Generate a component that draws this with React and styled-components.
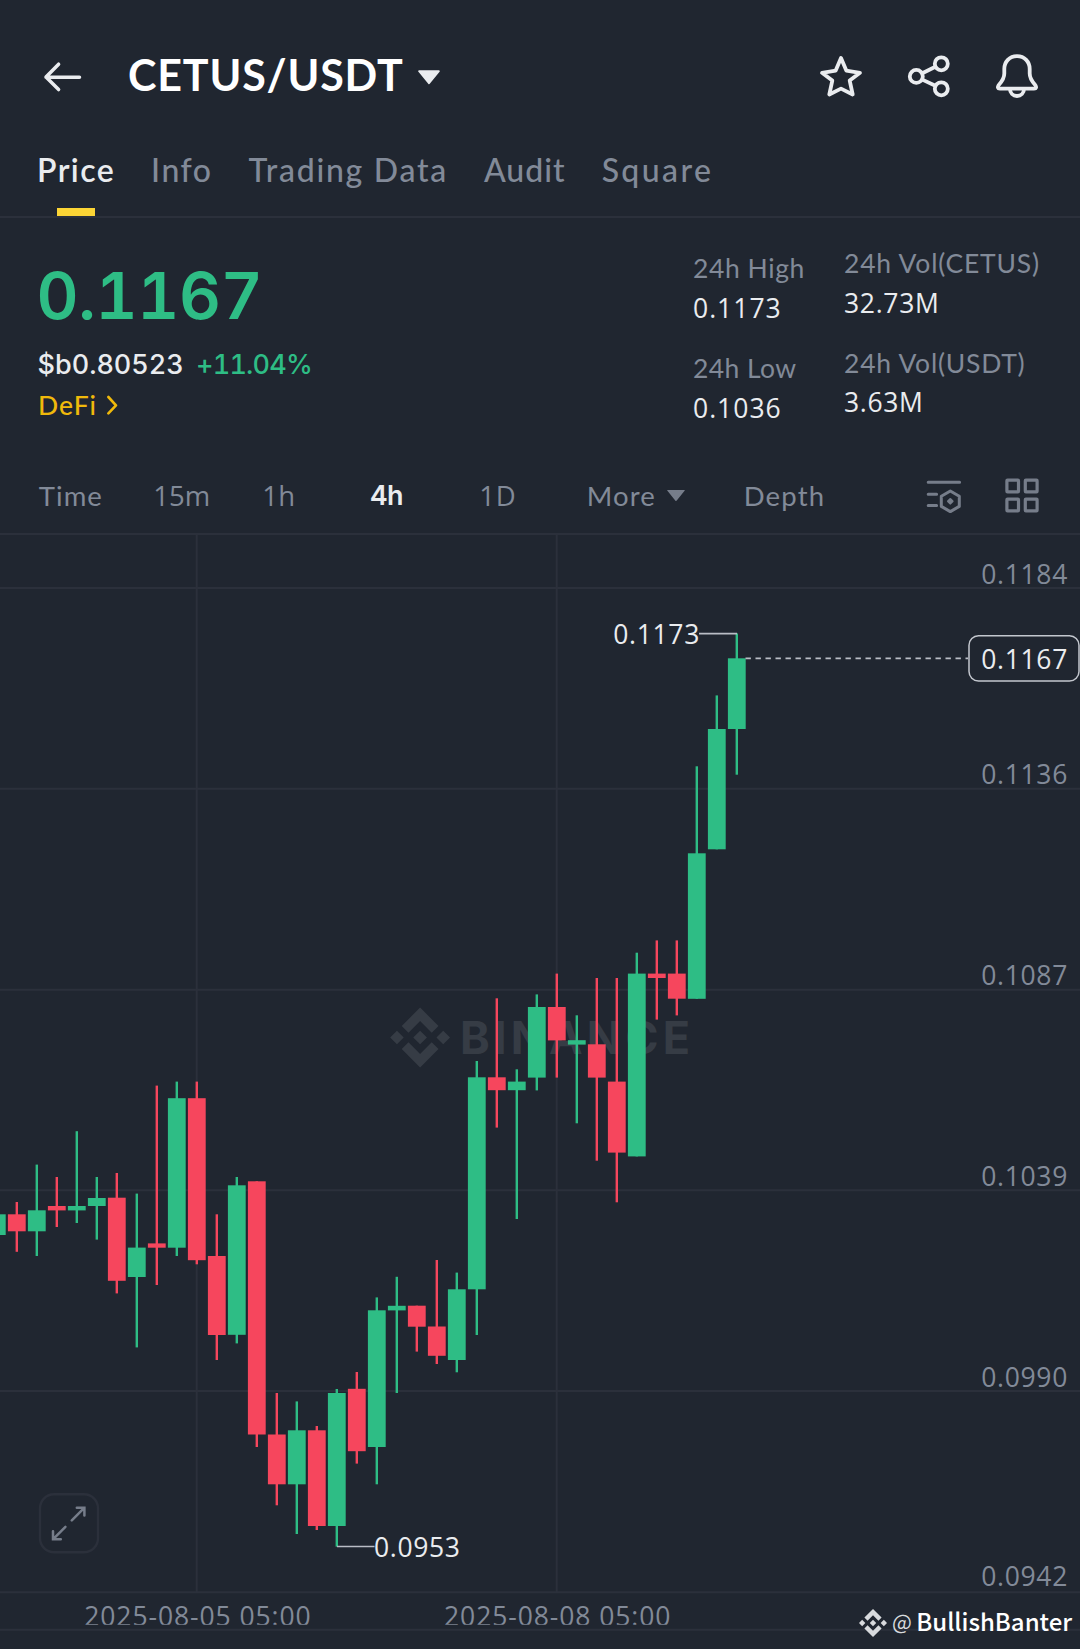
import React from "react";
import styled, { createGlobalStyle } from "styled-components";

const LETTERS = 'Lato, "Open Sans", sans-serif';
const DIGITS = '"Open Sans", "Noto Sans", sans-serif';
const DIGITS_MEDIUM = 'Inter, "Open Sans", sans-serif';

const color = {
  bg: "#202630",
  line: "#2b303b",
  text: "#eaecef",
  muted: "#828a98",
  icon: "#767d8a",
  up: "#2ebd85",
  down: "#f6465d",
  accent: "#fcd535",
  link: "#f0b90b",
  mark: "#363c45",
};

const GlobalStyle = createGlobalStyle`
  *, *::before, *::after { box-sizing: border-box; }
  html, body { margin: 0; background: ${color.bg}; }
`;

const Screen = styled.main`
  display: flex;
  flex-direction: column;
  width: 1080px;
  height: 1649px;
  overflow: hidden;
  background: ${color.bg};
  color: ${color.text};
  font-family: ${LETTERS};
  white-space: nowrap;
`;

/* ---------- header ---------- */

const Header = styled.header`
  display: flex;
  align-items: center;
  height: 138px;
  padding: 16px 39px 0 40px;
`;

const Icon = styled.svg`
  display: block;
  flex: none;
  width: ${(p) => p.$size}px;
  height: ${(p) => p.$size}px;
  fill: none;
  stroke: ${(p) => p.$color || color.text};
  stroke-width: ${(p) => p.$stroke || 3.8};
  stroke-linecap: round;
  stroke-linejoin: round;
`;

const Pair = styled.h1`
  margin: 0 0 0 40px;
  padding-bottom: 4px;
  font-size: 43px;
  line-height: 52px;
  font-weight: 700;
  letter-spacing: 0.82px;
  color: #fff;
`;

const Caret = styled.svg`
  display: block;
  flex: none;
  width: ${(p) => p.$w}px;
  height: ${(p) => p.$h}px;
  margin-left: ${(p) => p.$gap}px;
  fill: ${(p) => p.$color};
  stroke: ${(p) => p.$color};
  stroke-width: 2;
  stroke-linejoin: round;
`;

const Actions = styled.div`
  display: flex;
  gap: 40px;
  margin-left: auto;
`;

/* ---------- tabs ---------- */

const Tabs = styled.nav`
  display: flex;
  gap: 36px;
  height: 80px;
  padding-left: 37px;
  border-bottom: 2px solid ${color.line};
`;

const Tab = styled.div`
  display: flex;
  flex-direction: column;
  align-items: center;
  padding-top: 12px;
  font-size: 32px;
  line-height: 40px;
  font-weight: ${(p) => (p.$active ? 600 : 500)};
  letter-spacing: ${(p) => p.$track}px;
  color: ${(p) => (p.$active ? color.text : color.muted)};
`;

const TabBar = styled.span`
  width: 38px;
  height: 8px;
  margin-top: auto;
  background: ${color.accent};
`;

/* ---------- summary ---------- */

const Summary = styled.section`
  display: flex;
  height: 240px;
  padding-left: 37.5px;
`;

const Quote = styled.div`
  flex: 1;
  padding-top: 43px;
`;

const LastPrice = styled.div`
  margin-left: -1px;
  font: 600 65px/70px ${DIGITS_MEDIUM};
  font-variant-numeric: tabular-nums;
  letter-spacing: -0.3px;
  color: ${color.up};
`;

const QuoteRow = styled.div`
  display: flex;
  align-items: center;
  height: 40px;
  margin-top: ${(p) => p.$top}px;
`;

const Fiat = styled.span`
  width: 158.5px;
  font: 500 27px/40px ${DIGITS_MEDIUM};
  font-variant-numeric: tabular-nums;
  letter-spacing: 0;
`;

const Change = styled.span`
  font: 500 27px/40px ${DIGITS_MEDIUM};
  font-variant-numeric: tabular-nums;
  letter-spacing: -0.8px;
  color: ${color.up};
`;

const Sector = styled.span`
  margin-right: 8px;
  padding-left: 0.5px;
  font-size: 26.5px;
  line-height: 40px;
  font-weight: 500;
  letter-spacing: 1px;
  color: ${color.link};
`;

const Stats = styled.div`
  display: flex;
  flex-direction: column;
  gap: ${(p) => p.$gap}px;
  width: ${(p) => p.$w}px;
  padding-top: ${(p) => p.$top}px;
  line-height: ${(p) => p.$line}px;
`;

const StatLabel = styled.div`
  font-size: 26.5px;
  letter-spacing: ${(p) => p.$track}px;
  color: ${color.muted};
`;

const StatValue = styled.div`
  font-family: ${DIGITS};
  font-size: 26.5px;
  letter-spacing: ${(p) => p.$track}px;
`;

/* ---------- interval bar ---------- */

const Intervals = styled.nav`
  display: grid;
  grid-template-columns: 114.5px 109px 107.5px 109.5px 107.5px 157px 1fr auto;
  align-items: center;
  height: 77px;
  padding: 0 40px 0 38.7px;
  border-bottom: 2px solid ${color.line};
`;

const Interval = styled.div`
  display: flex;
  align-items: center;
  padding-top: 1px;
  font-family: ${(p) => (p.$digits ? DIGITS : LETTERS)};
  font-size: 27.5px;
  line-height: 40px;
  font-weight: 400;
  letter-spacing: ${(p) => p.$track}px;
  color: ${color.muted};
`;

const ActiveInterval = styled(Interval)`
  font-family: ${DIGITS_MEDIUM};
  font-size: 27px;
  font-weight: 600;
  padding-top: 0;
  color: ${color.text};
`;

const Tools = styled.div`
  display: flex;
  gap: 42px;
`;

/* ---------- chart ---------- */

const Chart = styled.svg`
  display: block;
  width: 1080px;
  height: 1114px;
`;

const GridLine = styled.line`
  stroke: ${color.line};
  stroke-width: 2;
`;

const AxisText = styled.text`
  font: 400 26.5px ${DIGITS};
  fill: ${(p) => (p.$strong ? color.text : color.muted)};
`;

const MarkText = styled.text`
  font: 700 45px Inter, "Open Sans", sans-serif;
  fill: ${color.mark};
`;

const Handle = styled.text`
  font: 500 24px "Noto Sans CJK SC", "Noto Sans", sans-serif;
  fill: #fff;
`;

const At = styled.text`
  font: 400 21px "Noto Sans CJK SC", "Noto Sans", sans-serif;
  fill: #d8dadd;
`;

const rows = [588, 788.7, 989.7, 1190.3, 1391, 1592.3, 1629.7];
const columns = [196.7, 556.7];
const priceAxis = [
  ["0.1184", 583.8],
  ["0.1136", 784],
  ["0.1087", 984.8],
  ["0.1039", 1185.8],
  ["0.0990", 1386.6],
  ["0.0942", 1586.2],
];
const dates = [
  ["2025-08-05 05:00", 84.2],
  ["2025-08-08 05:00", 444],
];

/* [rising, body top, body bottom, wick top, wick bottom] */
const candles = [
  [1, 1214.3, 1235, 1214.3, 1235],
  [0, 1214.3, 1231.3, 1202, 1251.8],
  [1, 1210.3, 1231.3, 1164.6, 1256],
  [0, 1206, 1210.4, 1177, 1227],
  [1, 1206, 1210.4, 1131.2, 1223],
  [1, 1198, 1206, 1177, 1239.6],
  [0, 1197.7, 1280.8, 1173, 1293.4],
  [1, 1247.6, 1277, 1193.6, 1347.4],
  [0, 1243.4, 1247.7, 1085.6, 1285],
  [1, 1098.2, 1247.7, 1081.6, 1256],
  [0, 1098.2, 1260.2, 1081.6, 1264.3],
  [0, 1256, 1335, 1214.3, 1360],
  [1, 1185.3, 1334.8, 1177, 1343.4],
  [0, 1181.3, 1434.5, 1181.3, 1447],
  [0, 1434.5, 1484.3, 1393, 1505.3],
  [1, 1430.3, 1484.3, 1401.4, 1534],
  [0, 1430.3, 1526, 1426, 1530],
  [1, 1393, 1526, 1389, 1546.7],
  [0, 1388.8, 1451.2, 1372, 1463.6],
  [1, 1310.3, 1447, 1297.4, 1484.3],
  [1, 1305.8, 1310.4, 1276.8, 1393],
  [0, 1305.7, 1326.7, 1305.7, 1351.6],
  [0, 1326.5, 1355.8, 1260, 1364],
  [1, 1289.3, 1360, 1272.6, 1372.3],
  [1, 1077.3, 1289.3, 1061, 1335],
  [0, 1077.3, 1090.2, 998.3, 1127.6],
  [1, 1081.6, 1090.2, 1069.3, 1219],
  [1, 1007, 1077.6, 994.4, 1090.4],
  [0, 1007, 1040.4, 973.6, 1077.6],
  [1, 1040.2, 1044.6, 1015.3, 1123.3],
  [0, 1044.3, 1077.6, 978, 1160.7],
  [0, 1081.6, 1152.6, 978, 1202.3],
  [1, 973.6, 1156.4, 952.7, 1156.4],
  [0, 973.6, 978, 940.4, 1019.6],
  [0, 973.6, 998.7, 940.4, 1015.4],
  [1, 853.3, 998.8, 766.3, 998.8],
  [1, 729, 849.3, 695.4, 849.3],
  [1, 658.3, 729, 633.4, 774.7],
];

const LOGO =
  "M38.73 53.2 63.32 28.62 87.92 53.22 102.22 38.91 63.32 0 24.43 38.9ZM0 63.31 14.3 49 28.61 63.31 14.31 77.6ZM38.73 73.41 63.32 98 87.92 73.4 102.23 87.69 63.33 126.6 24.42 87.72ZM98 63.31 112.3 49 126.61 63.3 112.3 77.62ZM77.83 63.3 63.32 48.78 48.81 63.28 63.32 77.78Z";

function Candle({ index, data }) {
  const [rising, top, bottom, high, low] = data;
  const x = (index - 1) * 20 + 16.8;
  const fill = rising ? color.up : color.down;
  return (
    <g fill={fill}>
      <rect x={x - 1.2} y={high} width={2.4} height={low - high} />
      <rect x={x - 8.9} y={top} width={17.8} height={bottom - top} />
    </g>
  );
}

function PriceChart() {
  return (
    <Chart viewBox="0 535 1080 1114">
      <defs>
        <clipPath id="dateStrip">
          <rect x="0" y="1595" width="1080" height="29.8" />
        </clipPath>
      </defs>

      {rows.map((y) => (
        <GridLine key={y} x1="0" x2="1080" y1={y} y2={y} />
      ))}
      {columns.map((x) => (
        <GridLine key={x} x1={x} x2={x} y1="535" y2="1592" />
      ))}

      <path d={LOGO} fill={color.mark} transform="translate(390.2 1007.6) scale(0.4723)" />
      <MarkText x="460" y="1054" textLength="230">BINANCE</MarkText>

      {candles.map((c, i) => (
        <Candle key={i} index={i} data={c} />
      ))}

      {priceAxis.map(([label, y]) => (
        <AxisText key={label} x="981.3" y={y} textLength="86">{label}</AxisText>
      ))}
      <g clipPath="url(#dateStrip)">
        {dates.map(([label, x]) => (
          <AxisText key={label} x={x} y="1626" textLength="226.4">{label}</AxisText>
        ))}
      </g>

      <path d="M699 633.6H737" stroke="#b9bdc5" strokeWidth="1.6" />
      <AxisText $strong x="613.3" y="643.8" textLength="86">0.1173</AxisText>
      <path d="M337 1546.5H374.5" stroke="#b9bdc5" strokeWidth="1.6" />
      <AxisText $strong x="374" y="1556.6" textLength="86">0.0953</AxisText>

      <path d="M745.5 658.4H968" stroke="#b9bdc5" strokeWidth="1.6" strokeDasharray="5.4 4.6" />
      <rect x="969" y="635.7" width="110" height="45.3" rx="9.5" fill={color.bg} stroke="#c3c7ce" strokeWidth="1.5" />
      <AxisText $strong x="981.3" y="668.8" textLength="86">0.1167</AxisText>

      <rect x="40" y="1494.3" width="58" height="58" rx="14" fill={color.bg} stroke={color.line} strokeWidth="2.4" />
      <path
        d="M71.8 1520.4 84 1508.2M76.8 1507.8H84.4V1515.6M65.4 1526.8 53.4 1538.8M53 1531.2V1539.2H60.8"
        fill="none"
        stroke={color.icon}
        strokeWidth="2.5"
        strokeLinecap="round"
        strokeLinejoin="miter"
      />

      <path d={LOGO} fill="#d8dadd" transform="translate(859 1609) scale(0.2212)" />
      <At x="892" y="1630">@</At>
      <Handle x="916.3" y="1630.8">BullishBanter</Handle>
    </Chart>
  );
}

const tabs = [
  ["Price", 1.4, true],
  ["Info", 1.5],
  ["Trading Data", 1.72],
  ["Audit", 1],
  ["Square", 2.4],
];

export default function App() {
  return (
    <Screen>
      <GlobalStyle />
      <Header>
        <Icon $size={48} $stroke={3.5} viewBox="0 0 48 48">
          <path d="M39.5 24.2H6M18.6 11.2 6 24 18.6 36.6" />
        </Icon>
        <Pair>CETUS/USDT</Pair>
        <Caret $w={22} $h={15} $gap={14} $color={color.text} viewBox="0 0 22 15">
          <path d="M1.2 1.2H20.8L11 13.2Z" />
        </Caret>
        <Actions>
          <Icon $size={48} viewBox="0 0 48 48">
            <path d="M24 4.9 29.3 17.6 43 19.8 32.7 27.6 35.7 41.5 24 35.6 12.3 41.5 15.3 27.6 5 19.8 18.7 17.6Z" />
          </Icon>
          <Icon $size={48} viewBox="0 0 48 48">
            <circle cx="11.3" cy="23.4" r="6.5" />
            <circle cx="36.3" cy="10.8" r="6.5" />
            <circle cx="36.3" cy="35.8" r="6.5" />
            <path d="M17.3 20.2 30.4 13.8M17.3 26.6 30.4 32.8" />
          </Icon>
          <Icon $size={48} viewBox="0 0 48 48">
            <path d="M24 3.1C16.4 3.1 11.3 8.8 11.3 16V20.5C11.3 25 9.6 27.6 6.2 31.4C4 34 4.8 35.6 7 35.6H41C43.2 35.6 44 34 41.8 31.4C38.4 27.6 36.7 25 36.7 20.5V16C36.7 8.8 31.6 3.1 24 3.1Z" />
            <path d="M17 36C17 40 20 43 24 43S31 40 31 36" />
          </Icon>
        </Actions>
      </Header>

      <Tabs>
        {tabs.map(([label, track, active]) => (
          <Tab key={label} $track={track} $active={active}>
            {label}
            {active && <TabBar />}
          </Tab>
        ))}
      </Tabs>

      <Summary>
        <Quote>
          <LastPrice>0.1167</LastPrice>
          <QuoteRow $top={14}>
            <Fiat>$b0.80523</Fiat>
            <Change>+11.04%</Change>
          </QuoteRow>
          <QuoteRow $top={-0.5}>
            <Sector>DeFi</Sector>
            <Icon $size={20} $stroke={2.6} $color={color.link} viewBox="0 0 20 20">
              <path d="M3.4 2 11 10.3 3.4 18.4" />
            </Icon>
          </QuoteRow>
        </Quote>
        <Stats $w={151} $top={29.6} $line={40} $gap={20}>
          <div>
            <StatLabel $track={0.57}>24h High</StatLabel>
            <StatValue $track={1}>0.1173</StatValue>
          </div>
          <div>
            <StatLabel $track={0.4}>24h Low</StatLabel>
            <StatValue $track={1}>0.1036</StatValue>
          </div>
        </Stats>
        <Stats $w={236} $top={26.4} $line={39.4} $gap={20.4}>
          <div>
            <StatLabel $track={0.8}>24h Vol(CETUS)</StatLabel>
            <StatValue $track={0.7}>32.73M</StatValue>
          </div>
          <div>
            <StatLabel $track={0.76}>24h Vol(USDT)</StatLabel>
            <StatValue $track={0.65}>3.63M</StatValue>
          </div>
        </Stats>
      </Summary>

      <Intervals>
        <Interval $track={1.1}>Time</Interval>
        <Interval $digits $track={0.1}>15m</Interval>
        <Interval $digits $track={0.28}>1h</Interval>
        <ActiveInterval $track={-0.6}>4h</ActiveInterval>
        <Interval $digits $track={0.78}>1D</Interval>
        <Interval $track={1.12}>
          More
          <Caret $w={18} $h={12} $gap={11} $color={color.icon} viewBox="0 1.5 18 12">
            <path d="M1.2 1.6H16.8L9 11.4Z" />
          </Caret>
        </Interval>
        <Interval $track={1.2}>Depth</Interval>
        <Tools>
          <Icon $size={36} $stroke={3} $color={color.icon} viewBox="0 0 36 36">
            <path d="M2.2 4.2H33.6M2.2 16.2H10.6M2.2 27.6H10.6M24.3 13 33.3 18.2V28.4L24.3 33.6 15.3 28.4V18.2Z" />
            <path d="M24.3 21 26.6 23.3 24.3 25.6 22 23.3Z" fill={color.icon} strokeWidth="2" />
          </Icon>
          <Icon $size={36} $stroke={3.2} $color={color.icon} viewBox="0 0 36 36">
            <rect x="2.9" y="2.1" width="11.6" height="11.8" rx="0.6" />
            <rect x="21.3" y="2.1" width="11.8" height="11.8" rx="0.6" />
            <rect x="2.9" y="21.1" width="11.6" height="11.8" rx="0.6" />
            <rect x="21.3" y="21.1" width="11.8" height="11.8" rx="0.6" />
          </Icon>
        </Tools>
      </Intervals>

      <PriceChart />
    </Screen>
  );
}
